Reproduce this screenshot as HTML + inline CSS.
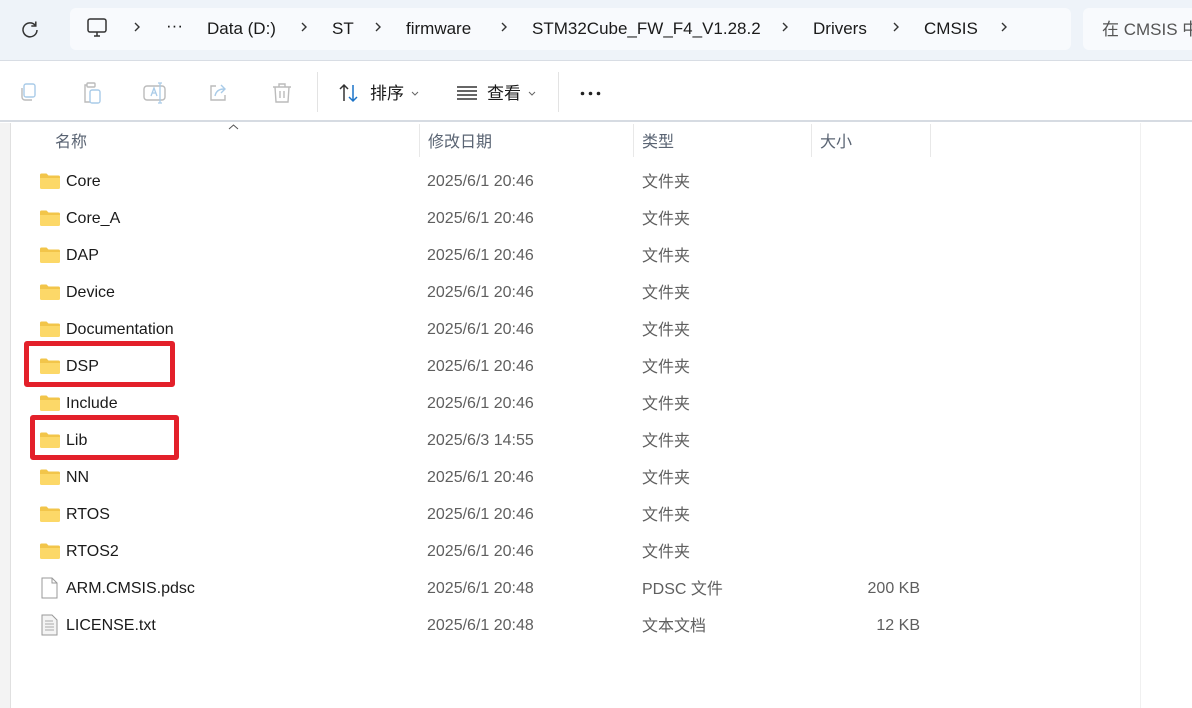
<!DOCTYPE html>
<html><head><meta charset="utf-8"><style>
*{margin:0;padding:0;box-sizing:border-box}
body{width:1192px;height:708px;overflow:hidden;background:#fff;font-family:"Liberation Sans","Noto Sans CJK SC",sans-serif;position:relative;color:#1a1a1a}
span{line-height:20px}
.top{position:absolute;left:0;top:0;width:1192px;height:61px;background:#eef3f9;border-bottom:1px solid #d8dde4}
.crumb{position:absolute;left:70px;top:8px;width:1001px;height:42px;background:#f8fafd;border-radius:6px}
.search{position:absolute;left:1083px;top:8px;width:120px;height:42px;background:#f8fafd;border-radius:6px;font-size:17px;color:#555;padding:12px 0 0 19px;white-space:nowrap;line-height:20px}
.t{position:absolute;font-size:17px;top:19px;white-space:nowrap;color:#1a1a1a}
.chev{position:absolute;top:22px}
.tool{position:absolute;left:0;top:62px;width:1192px;height:60px;background:#fff;border-bottom:2px solid #d6dbe2}
.sep{position:absolute;top:10px;width:1px;height:40px;background:#e3e3e3}
.side{position:absolute;left:0;top:123px;width:11px;height:585px;background:#f3f3f3;border-right:1px solid #e0e0e0}
.hdr{position:absolute;top:133px;font-size:16px;color:#5a6473}
.vl{position:absolute;top:124px;width:1px;height:33px;background:#e8e8e8}
.row{position:absolute;left:0;width:1140px;height:37px;font-size:16px}
.row .n{position:absolute;left:66px;top:9px}
.row .d{position:absolute;left:427px;top:9px;color:#5f5f5f}
.row .ty{position:absolute;left:642px;top:10px;color:#5f5f5f}
.row .s{position:absolute;right:220px;top:9px;color:#5f5f5f}
.fold{position:absolute;left:40px;top:10px;width:20px;height:16px}
.red{position:absolute;border:5px solid #e3202a;border-radius:3px}
</style></head><body>
<svg width="0" height="0" style="position:absolute"><defs>
<g id="f"><path d="M0 2a1.5 1.5 0 0 1 1.5-1.5h5l2 2h10a1.5 1.5 0 0 1 1.5 1.5v10a1.5 1.5 0 0 1-1.5 1.5h-17A1.5 1.5 0 0 1 0 14z" fill="#f2c54a"/><path d="M0 5h20v9.5a1.5 1.5 0 0 1-1.5 1.5h-17A1.5 1.5 0 0 1 0 14.5z" fill="#fcd868"/></g>
<path id="c" d="M1 1l4 4-4 4" fill="none" stroke="#333" stroke-width="1.4"/>
</defs></svg>
<div class="top">
 <svg style="position:absolute;left:20px;top:19px" width="20" height="20" viewBox="0 0 20 20"><path d="M15.5 6.5A7 7 0 1 0 17 11" fill="none" stroke="#333" stroke-width="1.5"/><path d="M15.8 2.5v4.5h-4.5" fill="none" stroke="#333" stroke-width="1.5"/></svg>
 <div class="crumb"></div>
 <svg style="position:absolute;left:86px;top:17px" width="22" height="22" viewBox="0 0 22 22"><rect x="2" y="2" width="18" height="13" rx="2" fill="none" stroke="#333" stroke-width="1.5"/><path d="M8 19h6M11 15v4" stroke="#333" stroke-width="1.5"/></svg>
 <svg class="chev" style="left:134px" width="8" height="10"><use href="#c"/></svg>
 <span class="t" style="left:166px;top:16px">···</span>
 <span class="t" style="left:207px">Data (D:)</span>
 <svg class="chev" style="left:301px" width="8" height="10"><use href="#c"/></svg>
 <span class="t" style="left:332px">ST</span>
 <svg class="chev" style="left:375px" width="8" height="10"><use href="#c"/></svg>
 <span class="t" style="left:406px">firmware</span>
 <svg class="chev" style="left:501px" width="8" height="10"><use href="#c"/></svg>
 <span class="t" style="left:532px">STM32Cube_FW_F4_V1.28.2</span>
 <svg class="chev" style="left:782px" width="8" height="10"><use href="#c"/></svg>
 <span class="t" style="left:813px">Drivers</span>
 <svg class="chev" style="left:893px" width="8" height="10"><use href="#c"/></svg>
 <span class="t" style="left:924px">CMSIS</span>
 <svg class="chev" style="left:1001px" width="8" height="10"><use href="#c"/></svg>
 <div class="search">在 CMSIS 中</div>
</div>
<div class="tool">
 <svg style="position:absolute;left:18px;top:20px" width="20" height="20" viewBox="0 0 20 20"><rect x="6" y="2" width="11" height="13" rx="2" fill="none" stroke="#a9cbe8" stroke-width="1.4"/><path d="M4 6v9a3 3 0 0 0 3 3h7" fill="none" stroke="#bbb" stroke-width="1.4"/></svg>
 <svg style="position:absolute;left:81px;top:20px" width="22" height="22" viewBox="0 0 22 22"><path d="M6 3H4v17h5" fill="none" stroke="#bbb" stroke-width="1.4"/><rect x="6" y="1" width="8" height="4" rx="1" fill="none" stroke="#bbb" stroke-width="1.4"/><rect x="9" y="8" width="10" height="13" rx="2" fill="none" stroke="#a9cbe8" stroke-width="1.4"/></svg>
 <svg style="position:absolute;left:143px;top:20px" width="24" height="22" viewBox="0 0 24 22"><rect x="1" y="4" width="21" height="14" rx="3" fill="none" stroke="#bbb" stroke-width="1.4"/><path d="M8 14l3-8 3 8M9 11h4" fill="none" stroke="#a9cbe8" stroke-width="1.3"/><path d="M15 1h4M17 1v20M15 21h4" stroke="#a9cbe8" stroke-width="1.3"/></svg>
 <svg style="position:absolute;left:207px;top:20px" width="22" height="22" viewBox="0 0 22 22"><path d="M9 4H4v14h14v-5" fill="none" stroke="#bbb" stroke-width="1.4"/><path d="M8 14c1-5 4-7 9-7M14 3l4 4-4 4" fill="none" stroke="#a9cbe8" stroke-width="1.4"/></svg>
 <svg style="position:absolute;left:271px;top:20px" width="22" height="22" viewBox="0 0 22 22"><path d="M2 5h18M8 5V2h6v3M4 5l1 15h12l1-15M9 9v7M13 9v7" fill="none" stroke="#bbb" stroke-width="1.4"/></svg>
 <div class="sep" style="left:317px"></div>
 <svg style="position:absolute;left:338px;top:21px" width="24" height="20" viewBox="0 0 24 20"><path d="M6 18V2M2 6l4-4 4 4" fill="none" stroke="#333" stroke-width="1.5"/><path d="M15 2v16M11 14l4 4 4-4" fill="none" stroke="#1a73c8" stroke-width="1.5"/></svg>
 <span style="position:absolute;left:370px;top:22px;font-size:17px">排序</span>
 <svg style="position:absolute;left:411px;top:29px" width="8" height="5"><path d="M1 1l3 3 3-3" fill="none" stroke="#666"/></svg>
 <svg style="position:absolute;left:456px;top:23px" width="22" height="16" viewBox="0 0 22 16"><path d="M1 2h20M1 6h20M1 10h20M1 14h20" stroke="#333" stroke-width="1.4"/></svg>
 <span style="position:absolute;left:487px;top:22px;font-size:17px">查看</span>
 <svg style="position:absolute;left:528px;top:29px" width="8" height="5"><path d="M1 1l3 3 3-3" fill="none" stroke="#666"/></svg>
 <div class="sep" style="left:558px"></div>
 <svg style="position:absolute;left:580px;top:29px" width="22" height="5"><circle cx="2.5" cy="2.5" r="1.8" fill="#222"/><circle cx="10.5" cy="2.5" r="1.8" fill="#222"/><circle cx="18.5" cy="2.5" r="1.8" fill="#222"/></svg>
</div>
<div class="side"></div>
<div style="position:absolute;left:1140px;top:123px;width:1px;height:585px;background:#f0f0f0"></div>
<svg style="position:absolute;left:228px;top:124px" width="11" height="6"><path d="M1 5l4.5-4 4.5 4" fill="none" stroke="#555"/></svg>
<span class="hdr" style="left:55px">名称</span>
<div class="vl" style="left:419px"></div><span class="hdr" style="left:428px">修改日期</span>
<div class="vl" style="left:633px"></div><span class="hdr" style="left:642px">类型</span>
<div class="vl" style="left:811px"></div><span class="hdr" style="left:820px">大小</span>
<div class="vl" style="left:930px"></div>

<div class="row" style="top:163px"><svg class="fold" viewBox="0 0 20 16"><use href="#f"/></svg><span class="n">Core</span><span class="d">2025/6/1 20:46</span><span class="ty">文件夹</span></div>
<div class="row" style="top:200px"><svg class="fold" viewBox="0 0 20 16"><use href="#f"/></svg><span class="n">Core_A</span><span class="d">2025/6/1 20:46</span><span class="ty">文件夹</span></div>
<div class="row" style="top:237px"><svg class="fold" viewBox="0 0 20 16"><use href="#f"/></svg><span class="n">DAP</span><span class="d">2025/6/1 20:46</span><span class="ty">文件夹</span></div>
<div class="row" style="top:274px"><svg class="fold" viewBox="0 0 20 16"><use href="#f"/></svg><span class="n">Device</span><span class="d">2025/6/1 20:46</span><span class="ty">文件夹</span></div>
<div class="row" style="top:311px"><svg class="fold" viewBox="0 0 20 16"><use href="#f"/></svg><span class="n">Documentation</span><span class="d">2025/6/1 20:46</span><span class="ty">文件夹</span></div>
<div class="row" style="top:348px"><svg class="fold" viewBox="0 0 20 16"><use href="#f"/></svg><span class="n">DSP</span><span class="d">2025/6/1 20:46</span><span class="ty">文件夹</span></div>
<div class="row" style="top:385px"><svg class="fold" viewBox="0 0 20 16"><use href="#f"/></svg><span class="n">Include</span><span class="d">2025/6/1 20:46</span><span class="ty">文件夹</span></div>
<div class="row" style="top:422px"><svg class="fold" viewBox="0 0 20 16"><use href="#f"/></svg><span class="n">Lib</span><span class="d">2025/6/3 14:55</span><span class="ty">文件夹</span></div>
<div class="row" style="top:459px"><svg class="fold" viewBox="0 0 20 16"><use href="#f"/></svg><span class="n">NN</span><span class="d">2025/6/1 20:46</span><span class="ty">文件夹</span></div>
<div class="row" style="top:496px"><svg class="fold" viewBox="0 0 20 16"><use href="#f"/></svg><span class="n">RTOS</span><span class="d">2025/6/1 20:46</span><span class="ty">文件夹</span></div>
<div class="row" style="top:533px"><svg class="fold" viewBox="0 0 20 16"><use href="#f"/></svg><span class="n">RTOS2</span><span class="d">2025/6/1 20:46</span><span class="ty">文件夹</span></div>
<div class="row" style="top:570px"><svg style="position:absolute;left:41px;top:7px" width="17" height="22" viewBox="0 0 17 22"><path d="M1 1h10l5 5v15H1z" fill="#fff" stroke="#999"/><path d="M11 1v5h5" fill="none" stroke="#999"/></svg><span class="n">ARM.CMSIS.pdsc</span><span class="d">2025/6/1 20:48</span><span class="ty">PDSC 文件</span><span class="s">200 KB</span></div>
<div class="row" style="top:607px"><svg style="position:absolute;left:41px;top:7px" width="17" height="22" viewBox="0 0 17 22"><path d="M1 1h10l5 5v15H1z" fill="#f4f4f4" stroke="#999"/><path d="M4 7h8M4 10h9M4 13h9M4 16h9" stroke="#aaa"/></svg><span class="n">LICENSE.txt</span><span class="d">2025/6/1 20:48</span><span class="ty">文本文档</span><span class="s">12 KB</span></div>

<div class="red" style="left:24px;top:341px;width:151px;height:46px"></div>
<div class="red" style="left:30px;top:415px;width:149px;height:45px"></div>
</body></html>
